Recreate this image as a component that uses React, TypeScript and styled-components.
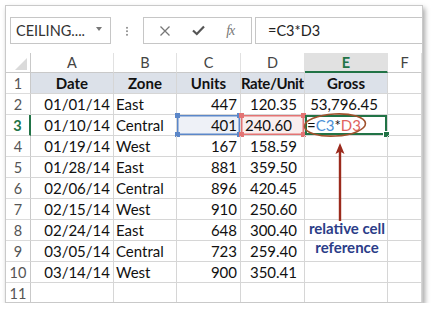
import { FC } from 'react';
import styled, { createGlobalStyle, css } from 'styled-components';

const GlobalStyle = createGlobalStyle`
  html, body {
    margin: 0;
    padding: 0;
    background: #fff;
  }
  body {
    font-family: 'Lato', 'Open Sans', 'Liberation Sans', sans-serif;
  }
`;

const Page = styled.div`
  padding: 5px 0 0 5px;
`;

const Window = styled.div`
  width: 418px;
  height: 298px;
  box-sizing: border-box;
  border: 1px solid #c9c9c9;
  background: #fff;
  box-shadow: 2px 3px 5px rgba(0, 0, 0, 0.35);
  overflow: hidden;
`;

const FormulaBar = styled.div`
  display: flex;
  align-items: center;
  height: 47px;
  box-sizing: border-box;
  padding: 11px 0 9px 4px;
`;

const NameBox = styled.div`
  width: 101px;
  height: 27px;
  box-sizing: border-box;
  border: 1px solid #c6c6c6;
  display: flex;
  align-items: center;
  justify-content: space-between;
  padding: 0 8px 0 5px;
  font-size: 14.5px;
  color: #333;
`;

const DropArrow = styled.span`
  width: 0;
  height: 0;
  border-left: 3px solid transparent;
  border-right: 3px solid transparent;
  border-top: 4px solid #777;
  margin-top: -4px;
`;

const Grip = styled.div`
  width: 2px;
  height: 10px;
  margin: 0 15px 0 15px;
  background-image: radial-gradient(circle, #999 0.8px, transparent 1px);
  background-size: 2px 3.5px;
`;

const ButtonBox = styled.div`
  width: 109px;
  height: 27px;
  box-sizing: border-box;
  border: 1px solid #c6c6c6;
  display: flex;
  align-items: center;
  justify-content: space-around;
  padding: 0 6px 0 4px;
  margin-right: 3px;
`;

const Fx = styled.span`
  font-family: 'Liberation Serif', serif;
  font-style: italic;
  font-size: 14px;
  color: #777;
  letter-spacing: -1px;
`;

const FormulaInput = styled.div`
  flex: 1;
  height: 27px;
  box-sizing: border-box;
  border: 1px solid #c6c6c6;
  border-right: none;
  display: flex;
  align-items: center;
  padding-left: 12px;
  font-size: 14.5px;
  color: #222;
`;

const Sheet = styled.div`
  position: relative;
  display: grid;
  grid-template-columns: 25px 83px 63px 64px 64px 83px 1fr;
  grid-auto-rows: 21px;
  grid-template-rows: 20px;
`;

const ColHead = styled.div<{ $active?: boolean }>`
  box-sizing: border-box;
  display: flex;
  align-items: center;
  justify-content: center;
  font-size: 14.5px;
  color: #444;
  border-right: 1px solid #e1e1e1;
  border-bottom: 1px solid #c9c9c9;
  ${(p) =>
    p.$active &&
    css`
      background: #e1e1e1;
      color: #217346;
      font-weight: 700;
      border-bottom: 2px solid #217346;
    `}
`;

const Corner = styled(ColHead)`
  align-items: flex-end;
  justify-content: flex-end;
  padding: 0 3px 2px 0;
  border-right: 1px solid #c9c9c9;
`;

const RowHead = styled.div<{ $active?: boolean }>`
  box-sizing: border-box;
  display: flex;
  align-items: center;
  justify-content: center;
  font-size: 14.5px;
  color: #555;
  border-right: 1px solid #c9c9c9;
  border-bottom: 1px solid #dcdcdc;
  ${(p) =>
    p.$active &&
    css`
      color: #217346;
      font-weight: 700;
      border-right: 2px solid #217346;
    `}
`;

type Align = 'left' | 'right' | 'center';

const Cell = styled.div<{ $align?: Align; $head?: boolean; $pad?: number }>`
  position: relative;
  box-sizing: border-box;
  display: flex;
  align-items: center;
  justify-content: ${(p) =>
    p.$align === 'right' ? 'flex-end' : p.$align === 'center' ? 'center' : 'flex-start'};
  padding: 0 ${(p) => (p.$align === 'right' ? p.$pad ?? 3 : 2)}px 0
    ${(p) => (p.$align === 'left' ? p.$pad ?? 2 : 2)}px;
  font-size: 15px;
  color: #111;
  white-space: nowrap;
  overflow: hidden;
  border-right: 1px solid #d6d6d6;
  border-bottom: 1px solid #d6d6d6;
  ${(p) =>
    p.$head &&
    css`
      background: #dce1e9;
      font-weight: 700;
      color: #111;
    `}
`;

const TightHead = styled(Cell)`
  letter-spacing: -0.4px;
`;

const RefCell = styled(Cell)<{ $tone: 'blue' | 'red' }>`
  overflow: visible;
  background: ${(p) => (p.$tone === 'blue' ? '#eef1f7' : '#f9eeee')};
  box-shadow: inset 0 0 0 1.5px
    ${(p) => (p.$tone === 'blue' ? '#5b87c9' : '#e37373')};
`;

const Handle = styled.span<{ $tone: string; $x: 'l' | 'r'; $y: 't' | 'b' }>`
  position: absolute;
  width: 5px;
  height: 5px;
  background: ${(p) => p.$tone};
  ${(p) => (p.$x === 'l' ? 'left: -2px;' : 'right: -2px;')}
  ${(p) => (p.$y === 't' ? 'top: -2px;' : 'bottom: -2px;')}
`;

const ActiveCell = styled(Cell)`
  overflow: visible;
  padding-left: 2px;
  box-shadow: inset 0 0 0 2px #217346;
`;

const FillHandle = styled.span`
  position: absolute;
  right: -3px;
  bottom: -3px;
  width: 5px;
  height: 5px;
  background: #217346;
  border: 1px solid #fff;
`;

const Ref = styled.span<{ $c: string }>`
  color: ${(p) => p.$c};
`;

const Overlay = styled.svg`
  position: absolute;
  left: 0;
  top: 0;
  pointer-events: none;
`;

const Note = styled.div`
  position: absolute;
  left: 298px;
  top: 166px;
  width: 86px;
  text-align: center;
  font-family: 'Lato', 'Open Sans', sans-serif;
  font-weight: 700;
  font-size: 15px;
  line-height: 19px;
  color: #2b3d88;
`;

const rows: [string, string, string, string][] = [
  ['01/01/14', 'East', '447', '120.35'],
  ['01/10/14', 'Central', '401', '240.60'],
  ['01/19/14', 'West', '167', '158.59'],
  ['01/28/14', 'East', '881', '359.50'],
  ['02/06/14', 'Central', '896', '420.45'],
  ['02/15/14', 'West', '910', '250.60'],
  ['02/24/14', 'East', '648', '300.40'],
  ['03/05/14', 'Central', '723', '259.40'],
  ['03/14/14', 'West', '900', '350.41'],
];

const RefHandles: FC<{ tone: string }> = ({ tone }) => (
  <>
    <Handle $tone={tone} $x="l" $y="t" />
    <Handle $tone={tone} $x="r" $y="t" />
    <Handle $tone={tone} $x="l" $y="b" />
    <Handle $tone={tone} $x="r" $y="b" />
  </>
);

const App: FC = () => (
  <>
    <GlobalStyle />
    <Page>
      <Window>
        <FormulaBar>
          <NameBox>
            CEILING....
            <DropArrow />
          </NameBox>
          <Grip />
          <ButtonBox>
            <svg width="12" height="12" viewBox="0 0 12 12">
              <path d="M1.5 1.5 L10.5 10.5 M10.5 1.5 L1.5 10.5" stroke="#777" strokeWidth="1.3" fill="none" />
            </svg>
            <svg width="13" height="11" viewBox="0 0 13 11">
              <path d="M1 5.5 L4.8 9 L12 1.5" stroke="#555" strokeWidth="2.2" fill="none" />
            </svg>
            <Fx>fx</Fx>
          </ButtonBox>
          <FormulaInput>=C3*D3</FormulaInput>
        </FormulaBar>
        <Sheet>
          <Corner>
            <svg width="12" height="12" viewBox="0 0 12 12">
              <path d="M12 0 L12 12 L0 12 Z" fill="#dadada" />
            </svg>
          </Corner>
          <ColHead>A</ColHead>
          <ColHead>B</ColHead>
          <ColHead>C</ColHead>
          <ColHead>D</ColHead>
          <ColHead $active>E</ColHead>
          <ColHead>F</ColHead>

          <RowHead>1</RowHead>
          <Cell $head $align="center">Date</Cell>
          <Cell $head $align="center">Zone</Cell>
          <Cell $head $align="center">Units</Cell>
          <TightHead $head $align="left" $pad={0}>Rate/Unit</TightHead>
          <Cell $head $align="center">Gross</Cell>
          <Cell />

          {rows.map((r, i) => {
            const n = i + 2;
            const active = n === 3;
            return [
              <RowHead key={`h${n}`} $active={active}>{n}</RowHead>,
              <Cell key={`a${n}`} $align="right">{r[0]}</Cell>,
              <Cell key={`b${n}`} $align="left">{r[1]}</Cell>,
              active ? (
                <RefCell key={`c${n}`} $tone="blue" $align="right">
                  {r[2]}
                  <RefHandles tone="#5b87c9" />
                </RefCell>
              ) : (
                <Cell key={`c${n}`} $align="right">{r[2]}</Cell>
              ),
              active ? (
                <RefCell key={`d${n}`} $tone="red" $align="right" $pad={12}>
                  {r[3]}
                  <RefHandles tone="#e37373" />
                </RefCell>
              ) : (
                <Cell key={`d${n}`} $align="right" $pad={7}>{r[3]}</Cell>
              ),
              n === 2 ? (
                <Cell key={`e${n}`} $align="right" $pad={9}>53,796.45</Cell>
              ) : active ? (
                <ActiveCell key={`e${n}`} $align="left">
                  =<Ref $c="#4a8fd6">C3</Ref>*<Ref $c="#e0625c">D3</Ref>
                  <FillHandle />
                </ActiveCell>
              ) : (
                <Cell key={`e${n}`} />
              ),
              <Cell key={`f${n}`} />,
            ];
          })}

          <RowHead>11</RowHead>
          <Cell />
          <Cell />
          <Cell />
          <Cell />
          <Cell />
          <Cell />

          <Overlay width="412" height="250" viewBox="0 0 412 250">
            <ellipse
              cx="329"
              cy="72"
              rx="30.5"
              ry="11"
              transform="rotate(-3 329 72)"
              fill="none"
              stroke="#a0522d"
              strokeWidth="1.6"
            />
            <line x1="334" y1="96" x2="334" y2="168" stroke="#9b2a1c" strokeWidth="2.4" />
            <path d="M334 90 L329.5 101 L334 98.5 L338.5 101 Z" fill="#9b2a1c" />
          </Overlay>
          <Note>
            relative cell
            <br />
            reference
          </Note>
        </Sheet>
      </Window>
    </Page>
  </>
);

export default App;
